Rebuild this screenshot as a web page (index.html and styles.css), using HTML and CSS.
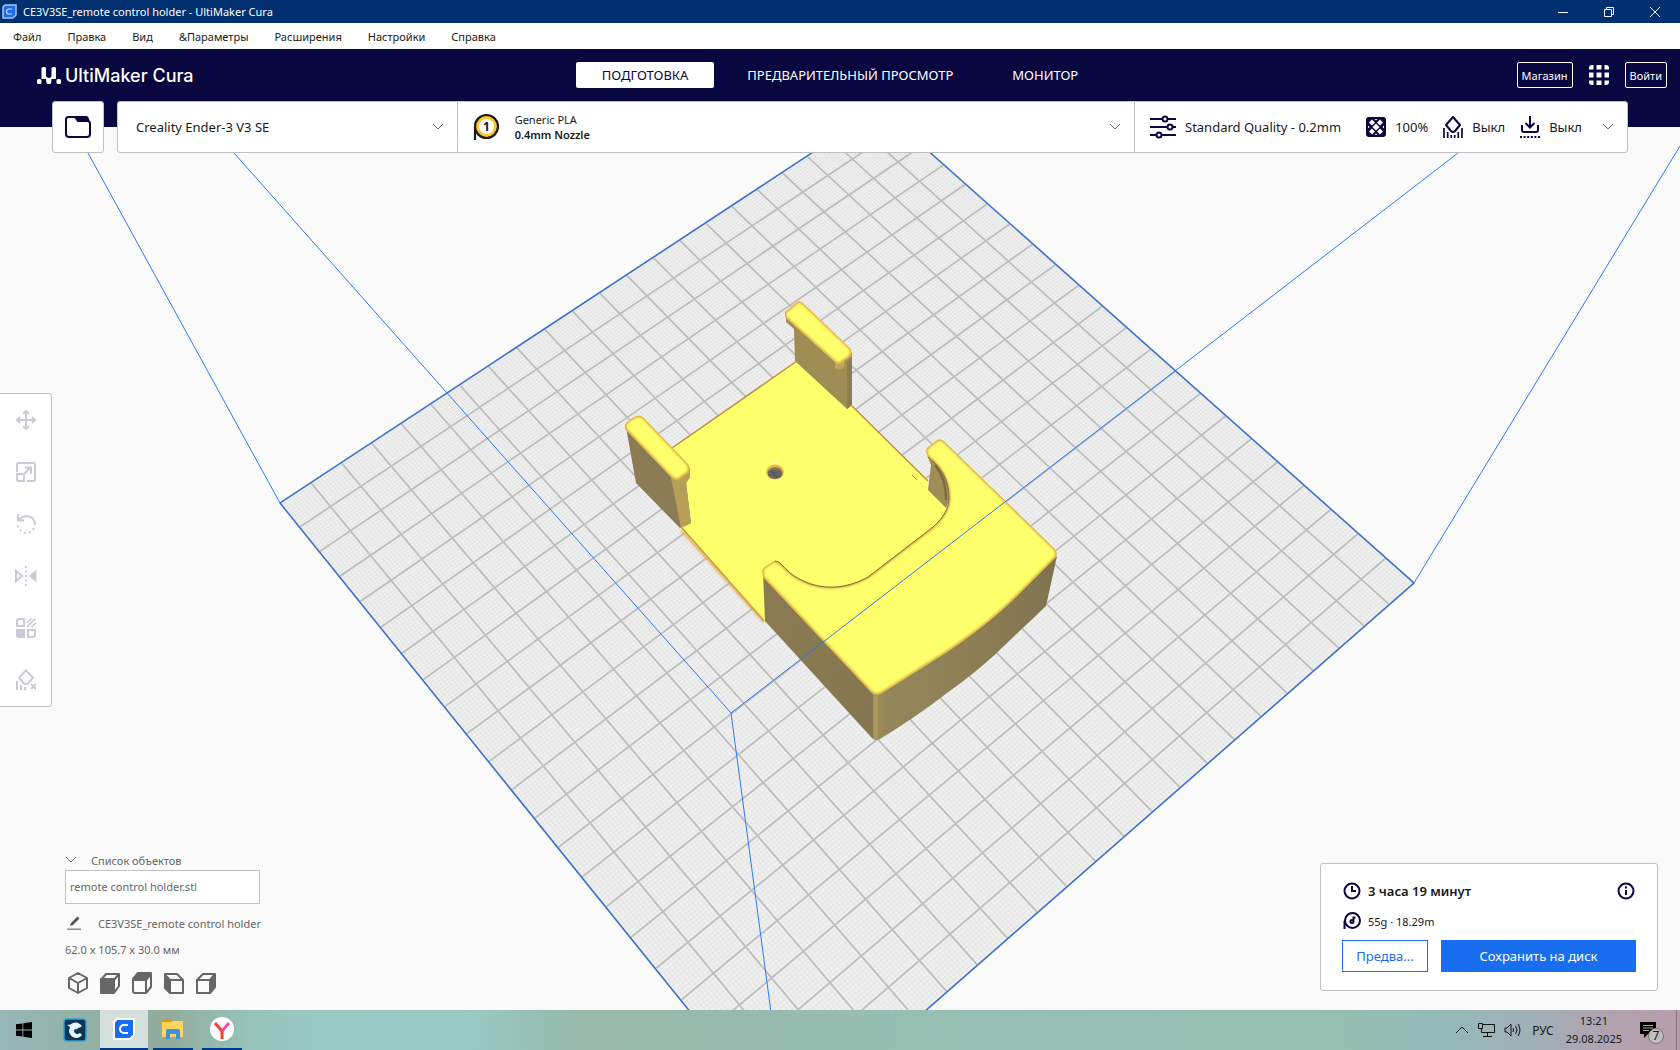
FILE: index.html
```html
<!DOCTYPE html>
<html lang="ru">
<head>
  <meta charset="utf-8">
  <meta name="viewport" content="width=device-width, initial-scale=1">
  <title>CE3V3SE_remote control holder - UltiMaker Cura</title>
  <link rel="stylesheet" href="styles.css">
</head>
<body>

  <div class="titlebar">
    <svg class="app-icon" width="15" height="15" viewBox="0 0 15 15">
      <path d="M3 1h11v10l-3 3H1V3z" fill="#1a6df0" stroke="#a9c4ee" stroke-width="1.5"/>
      <path d="M10 5H7a2.3 2.3 0 0 0 0 5h3" fill="none" stroke="#cfe0ff" stroke-width="1.2"/>
    </svg>
    <span class="titlebar-text">CE3V3SE_remote control holder - UltiMaker Cura</span>
    <div class="window-buttons">
      <button aria-label="Свернуть"><svg width="12" height="12" viewBox="0 0 12 12"><path d="M1 6.500h10"/></svg></button>
      <button aria-label="Развернуть"><svg width="12" height="12" viewBox="0 0 12 12"><path d="M1.500 3.500h7v7h-7zM3.500 3.500v-2h7v7h-2"/></svg></button>
      <button aria-label="Закрыть"><svg width="12" height="12" viewBox="0 0 12 12"><path d="M1 1l10 10M11 1L1 11"/></svg></button>
    </div>
  </div>

  <nav class="menu">
    <a href="#">Файл</a>
    <a href="#">Правка</a>
    <a href="#">Вид</a>
    <a href="#">&amp;Параметры</a>
    <a href="#">Расширения</a>
    <a href="#">Настройки</a>
    <a href="#">Справка</a>
  </nav>

  <header class="header">
    <div class="logo">
      <svg width="24" height="17" viewBox="0 0 24 17" fill="#fff">
        <rect x="0" y="12" width="4.500" height="5" rx="1.500"/>
        <rect x="19.500" y="12" width="4.500" height="5" rx="1.500"/>
        <path d="M4.500 1.500Q4.500 0 6 0h1.500Q9 0 9 1.500V9q1 2 3 2t2.500-2V1.500Q14.500 0 16 0h1.500Q19 0 19 1.500V12h-4.500q0 5-1.500 5h-2q-2 0-2-5H4.500z"/>
      </svg>
      <span>UltiMaker Cura</span>
    </div>
    <div class="tabs">
      <button class="tab active">ПОДГОТОВКА</button>
      <button class="tab">ПРЕДВАРИТЕЛЬНЫЙ ПРОСМОТР</button>
      <button class="tab">МОНИТОР</button>
    </div>
    <div class="account">
      <button class="outline-btn">Магазин</button>
      <button class="apps-btn" aria-label="Приложения">
        <svg width="20" height="20" viewBox="0 0 20 20" fill="#fff">
          <path d="M0 4.500V3Q0 0 3 0h1.500v4.500zM7.500 0h5v4.500h-5zM15.500 0H17q3 0 3 3v1.500h-4.500zM0 7.500h4.500v5H0zM7.500 7.500h5v5h-5zM15.500 7.500H20v5h-4.500zM0 15.500h4.500V20H3q-3 0-3-3zM7.500 15.500h5V20h-5zM15.500 15.500H20V17q0 3-3 3h-1.500z"/>
        </svg>
      </button>
      <button class="outline-btn">Войти</button>
    </div>
  </header>

  <main class="stage">

    <!-- 3d view -->
    <svg class="scene" viewBox="0 127 1680 883" preserveAspectRatio="xMidYMid slice">
      <defs>
        <linearGradient id="leftSide" x1="0" y1="0" x2="1" y2="1">
          <stop offset="0" stop-color="#8a7b54"/><stop offset="1" stop-color="#84774f"/>
        </linearGradient>
        <linearGradient id="frontSide" x1="0" y1="0" x2="1" y2="0">
          <stop offset="0" stop-color="#a39057"/><stop offset=".08" stop-color="#94865a"/>
          <stop offset=".5" stop-color="#8e7f55"/><stop offset="1" stop-color="#7f7350"/>
        </linearGradient>
        <filter id="soft"><feGaussianBlur stdDeviation="1"/></filter>
        <clipPath id="blockClip"><use href="#blockTop"/></clipPath>
        <clipPath id="barClip1"><use href="#bar1"/></clipPath>
        <clipPath id="barClip2"><use href="#bar2"/></clipPath>
      </defs>

      <path id="plate" fill="#f0f0f0"/>
      <path id="gridFine" fill="none" stroke="#e4e4e4" stroke-width="1"/>
      <path id="grid" fill="none" stroke="#bfbfbf" stroke-width="1.900"/>
      <path id="plateEdge" fill="none" stroke="#2f6fd6" stroke-width="1.300"/>

      <!-- base of the model -->
      <path d="M672 448L797 361 852 406 928 480 929 490 946 507 949 530 900 600 790 645 764 621 680 528z" fill="#ffff6c"/>
      <path d="M672 448L797 361M852 406L928 481M764 621L682 528" fill="none" stroke="#c08f42" stroke-width="1.500"/>
      <path d="M681 530L764 622" fill="none" stroke="#e0ad4b" stroke-width="2" filter="url(#soft)"/>
      <path d="M912 475l5 5" stroke="#a39448" stroke-width="1"/>

      <ellipse cx="775" cy="472" rx="9" ry="7.500" fill="#e5bc55"/>
      <ellipse cx="775" cy="473" rx="7.500" ry="6" fill="#8a7a50"/>
      <ellipse cx="775" cy="474" rx="7" ry="4.500" fill="#646464"/>
      <path d="M771 471l6 6" stroke="#444" stroke-width="1"/>
      <path d="M770 463h9" stroke="#ffffb8" stroke-width="1"/>

      <!-- posts -->
      <path d="M786 314v8l8 7 1 32 52 48 5-4v-52z" fill="#a08d56"/>
      <path d="M847 362l5-5v48l-5 4z" fill="#8d7d50"/>
      <path d="M835 361v7q5 3 9 0l1-7z" fill="#c4a456"/>
      <path id="bar1" d="M785 312L797 302Q800 300 803 303L850 348Q852 350 851 356L841 363Q838 365 835 362L785 317z" fill="#ffff6c"/>
      <g clip-path="url(#barClip1)"><use href="#bar1" fill="none" class="rim"/></g>

      <path d="M626 427L636 483 680 528 691 523 686 483 690 477V468z" fill="#8a7b54"/>
      <path d="M671 478L681 528 691 523 686 483 690 477V468z" fill="#b89f57"/>
      <path id="bar2" d="M625 425Q626 422 631 419L636 416Q641 415 644 418L688 464Q690 467 689 472L679 479Q676 481 672 478L627 431Q624 429 625 425z" fill="#ffff6c"/>
      <g clip-path="url(#barClip2)"><use href="#bar2" fill="none" class="rim"/></g>

      <!-- front block -->
      <path d="M927 455L931 465 928 490 946 508 951 495 948 475z" fill="#a08d56"/>
      <path d="M935 465Q946 478 946 500" fill="none" stroke="#75684a" stroke-width="2"/>
      <path d="M763 572L765 621 872 738Q875 741 879 739L884 690z" fill="url(#leftSide)"/>
      <path d="M873 690V738Q876 741 880 739 916 717 947 693 980 670 1007 643L1046 606 1057 556 1020 580z" fill="url(#frontSide)"/>
      <path id="blockTop" d="M762 571Q763 568 766 566L774 561Q778 561 782 565C790 574 797 579 811 584 830 590 850 587 868 577L933 527C944 517 949 508 949 498 949 480 941 467 928 457Q925 452 927 448L937 440Q941 438 945 442L1055 549Q1058 553 1056 557L1017 596Q990 623 947 652L882 693Q876 696 872 693L763 577z" fill="#ffff6c"/>
      <g clip-path="url(#blockClip)"><use href="#blockTop" fill="none" class="rim"/></g>
      <path d="M775 561Q779 561 782 565C790 574 797 579 811 584 830 590 850 587 868 577L933 527C944 517 949 508 949 498 949 480 941 467 928 457" fill="none" stroke="#806a3b" stroke-width="1"/>
      <path d="M876 696V739" stroke="#b09a58" stroke-width="3"/>

      <!-- build volume -->
      <path class="volume" d="M88 153L280 503M234 153L731 713 1458 153M731 713L787 1132M1414 583L1680 146"/>
    </svg>

    <div class="toolbar">
      <button class="open-btn" aria-label="Открыть файл">
        <svg width="26" height="24" viewBox="0 0 26 24">
          <path d="M3.500 2H10l3 4h9.500Q25 6 25 8.500V19q0 3-3 3H4q-3 0-3-3V4.500Q1 2 3.500 2z" fill="none" stroke="#08073f" stroke-width="2"/>
          <path d="M9.500 1H21q3 0 3.500 5.500H13z" fill="#08073f"/>
        </svg>
      </button>
      <div class="config">
        <label class="machine">
          <select aria-label="Принтер"><option>Creality Ender-3 V3 SE</option></select>
          <svg class="chevron" width="12" height="8" viewBox="0 0 12 8"><path d="M1 1l5 5 5-5"/></svg>
        </label>
        <button class="material">
          <svg width="26" height="28" viewBox="0 0 26 28">
            <path d="M2 27V14" stroke="#191919" stroke-width="2.200"/>
            <circle cx="13.500" cy="13.500" r="11.500" fill="#ffc72c" stroke="#191919" stroke-width="2.200"/>
            <circle cx="13.500" cy="13.500" r="7.500" fill="#fff"/>
            <text x="13.500" y="18" text-anchor="middle" font-size="12" font-weight="700" fill="#191919">1</text>
          </svg>
          <span class="material-text">Generic PLA<b>0.4mm Nozzle</b></span>
          <svg class="chevron" width="12" height="8" viewBox="0 0 12 8"><path d="M1 1l5 5 5-5"/></svg>
        </button>
        <button class="settings">
          <svg width="26" height="24" viewBox="0 0 26 24" fill="none" stroke="#08073f" stroke-width="2">
            <path d="M0 4h12M18 4h8M0 12h17M23 12h3M0 20h6M12 20h14"/>
            <circle cx="15" cy="4" r="2.500"/><circle cx="20" cy="12" r="2.500"/><circle cx="9" cy="20" r="2.500"/>
          </svg>
          <span class="profile">Standard Quality - 0.2mm</span>
          <span class="setting">
            <svg width="20" height="20" viewBox="0 0 20 20">
              <rect width="20" height="20" rx="3" fill="#08073f"/>
              <path d="M6 2.500l3 3-3 3-3-3zM14 2.500l3 3-3 3-3-3zM10 6.500l3.500 3.500-3.500 3.500L6.500 10zM6 11.500l3 3-3 3-3-3zM14 11.500l3 3-3 3-3-3zM8.500 2h3L10 3.500zM8.500 18h3L10 16.500zM2 8.500v3L3.500 10zM18 8.500v3L16.500 10z" fill="#fff"/>
            </svg>
            100%
          </span>
          <span class="setting">
            <svg width="20" height="22" viewBox="0 0 20 22" fill="none" stroke="#08073f" stroke-width="2">
              <path d="M10 1L17 9 12 15Q10 17 8 15L3 9z" stroke-linejoin="round"/>
              <path d="M1 12v10M4.700 16v6M8.300 19v3M11.700 19v3M15.300 16v6M19 12v10" stroke-width="1.700"/>
            </svg>
            Выкл
          </span>
          <span class="setting">
            <svg width="20" height="22" viewBox="0 0 20 22" fill="none" stroke="#08073f" stroke-width="2">
              <path d="M10 0v11M5.500 7l4.500 4.500L14.500 7M2 9v5q0 2 2 2h12q2 0 2-2V9"/>
              <path d="M0 21h20" stroke-dasharray="2 1.600"/>
            </svg>
            Выкл
          </span>
          <svg class="chevron" width="12" height="8" viewBox="0 0 12 8"><path d="M1 1l5 5 5-5"/></svg>
        </button>
      </div>
    </div>

    <div class="tools">
      <button aria-label="Перемещение"><svg width="20" height="20" viewBox="0 0 20 20"><path d="M10 1v18M1 10h18M7 4l3-3 3 3M7 16l3 3 3-3M4 7l-3 3 3 3M16 7l3 3-3 3"/></svg></button>
      <button aria-label="Масштаб"><svg width="20" height="20" viewBox="0 0 20 20"><path d="M1 10V3q0-2 2-2h14q2 0 2 2v14q0 2-2 2h-6M1 12h7v7H3q-2 0-2-2zM8 12l7-7M9 5.500h6V12"/></svg></button>
      <button aria-label="Поворот"><svg width="20" height="20" viewBox="0 0 20 20"><path d="M2 0v6.500h6M3 6Q6 2 11 2q8 1 8 9"/><path d="M18 14Q15 19 10 19T1 11" stroke-dasharray="2 3"/></svg></button>
      <button aria-label="Зеркало"><svg width="22" height="20" viewBox="0 0 22 20"><path d="M1 5v10l6-5z"/><path d="M21.500 3.500v13L14 10z" fill="#cbcad8" stroke="none"/><path d="M11 0v20" stroke-dasharray="2 2.500"/></svg></button>
      <button aria-label="Параметры модели"><svg width="20" height="20" viewBox="0 0 20 20"><path d="M3 1h5v7H1V3q0-2 2-2zM12 12h7v5q0 2-2 2h-5z"/><path d="M11 5l4.500-4.500M11 9l8.500-8.500M15.500 9L20 4.500" stroke-width="1.700"/><path d="M0 11h9v9H3q-3 0-3-3z" fill="#cbcad8" stroke="none"/></svg></button>
      <button aria-label="Блокировка поддержек"><svg width="20" height="22" viewBox="0 0 20 22"><path d="M10 1.500l7 7-5 6q-2 1-4 0l-5-6z"/><path d="M1 12v9M5 16v5M9 18v3M15 15l5 5M20 15l-5 5"/></svg></button>
    </div>

    <div class="bottom">
      <section class="objects">
        <button class="objects-toggle">
          <svg class="chevron" width="12" height="8" viewBox="0 0 12 8"><path d="M1 1l5 5 5-5"/></svg>
          Список объектов
        </button>
        <ul class="object-list"><li>remote control holder.stl</li></ul>
        <div class="job">
          <svg width="14" height="14" viewBox="0 0 14 14"><path d="M0 13.500h14" stroke="#8a8a8a" stroke-width="2"/><path d="M3 10l1-3 6.500-6.500 2 2L6 9z" fill="#555"/></svg>
          CE3V3SE_remote control holder
        </div>
        <div class="size">62.0 x 105.7 x 30.0 мм</div>
        <div class="views">
          <button aria-label="3D"><svg width="20" height="22" viewBox="0 0 20 22"><path d="M10 1l9 5v10l-9 5-9-5V6zM1 6l9 5 9-5M10 11v10"/></svg></button>
          <button aria-label="Спереди"><svg width="20" height="22" viewBox="0 0 20 22"><path d="M1 8l5-6h13v12l-5 7M19 2l-5 6"/><path d="M0 7h14v14H2q-2 0-2-2z" fill="#666"/></svg></button>
          <button aria-label="Сверху"><svg width="20" height="22" viewBox="0 0 20 22"><path d="M1 8v11q0 2 2 2h11V8zM14 21l5-6V3"/><path d="M0 8l6-7h13v1l-5 6z" fill="#666"/></svg></button>
          <button aria-label="Слева"><svg width="20" height="22" viewBox="0 0 20 22"><path d="M6 8h13v13H6zM1 2h12l6 6"/><path d="M0 2l6 6v13l-6-6z" fill="#666"/></svg></button>
          <button aria-label="Справа"><svg width="20" height="22" viewBox="0 0 20 22"><path d="M1 8h13v13H1zM1 8l6-6h12"/><path d="M14 8l5-6v13l-5 6z" fill="#666"/></svg></button>
        </div>
      </section>

      <section class="action">
        <div class="action-row">
          <svg width="18" height="18" viewBox="0 0 18 18"><circle cx="9" cy="9" r="7.500"/><path d="M9 4v5h4"/></svg>
          <b>3 часа 19 минут</b>
          <button class="info-btn" aria-label="Подробнее"><svg width="18" height="18" viewBox="0 0 18 18"><circle cx="9" cy="9" r="7.500"/><path d="M9 8v5M9 4.500v2"/></svg></button>
        </div>
        <div class="action-row small">
          <svg width="18" height="18" viewBox="0 0 18 18"><circle cx="9.500" cy="8.500" r="7.500"/><circle cx="9" cy="9.500" r="1.500"/><path d="M1.500 9v8M10.500 8V5.500h2"/></svg>
          <span>55g · 18.29m</span>
        </div>
        <div class="action-buttons">
          <button class="preview-btn">Предва...</button>
          <button class="save-btn">Сохранить на диск</button>
        </div>
      </section>
    </div>
  </main>

  <footer class="taskbar">
    <button class="task start" aria-label="Пуск"><svg width="16" height="16" viewBox="0 0 16 16"><path d="M0 2.300L6.500 1.400V7.600H0zM7.300 1.300L16 0v7.600H7.300zM0 8.400h6.500v6.200L0 13.700zM7.300 8.400H16V16l-8.700-1.300z"/></svg></button>
    <button class="task" aria-label="Creality Print"><svg width="24" height="24" viewBox="0 0 24 24">
      <rect x="1" y="1" width="22" height="22" rx="3" fill="#0e3557" stroke="#2ca5d8" stroke-width="1.500"/>
      <path d="M19 8Q15 3 10 5 8 7 4 7q3 1 3 3-2 3 0 6 2 4 7 4 3 0 5-3l-2-2q-3 2-5 0-2-2 0-4 2 1 3-1 2 0 4-2z" fill="#e9f1fa"/></svg></button>
    <button class="task running current" aria-label="UltiMaker Cura"><svg width="22" height="22" viewBox="0 0 22 22">
      <path d="M4 1h17v16l-4 4H1V4z" fill="#1a6df0" stroke="#fff" stroke-width="2"/>
      <path d="M15 7h-4a4 4 0 0 0 0 8h4" fill="none" stroke="#fff" stroke-width="2"/></svg></button>
    <button class="task running" aria-label="Проводник"><svg width="22" height="20" viewBox="0 0 22 20">
      <path d="M0 0h9l2 3H0z" fill="#dc9b00"/><path d="M0 3h9l2-1h10v16H0z" fill="#ffd35c"/>
      <path d="M4 20v-8q0-2 2-2h10q2 0 2 2v8h-4v-5H8v5z" fill="#3c91d8"/></svg></button>
    <button class="task running" aria-label="Yandex"><svg width="24" height="24" viewBox="0 0 24 24">
      <circle cx="12" cy="12" r="12" fill="#fff"/><path d="M5 6l7 8v8" fill="none" stroke="#f9412c" stroke-width="3"/><path d="M12 14l7-8" stroke="#f44ba5" stroke-width="3"/></svg></button>

    <div class="tray">
      <svg width="14" height="8" viewBox="0 0 14 8"><path d="M1 7l6-6 6 6"/></svg>
      <svg width="17" height="14" viewBox="0 0 17 14"><path d="M5 1.500h11.500v8H3.500V6M.5.500h4v5h-4zM9.500 9.500v4M5 13.500h9"/></svg>
      <svg width="18" height="14" viewBox="0 0 18 14"><path d="M1 5h2l4-4v12L3 9H1zM9 5q1 2 0 4M11.500 3q3 4 0 8M14 1q4 6 0 12"/></svg>
      <span class="lang">РУС</span>
      <span class="clock">13:21<br>29.08.2025</span>
      <span class="notify">
        <svg width="16" height="16" viewBox="0 0 16 16"><path d="M0 0h16v12H8l-4 4v-4H0z" fill="#000" stroke="none"/><path d="M3 3.500h10M3 6h10M3 8.500h6" stroke="#b5a0aa"/></svg>
        <span class="badge">7</span>
      </span>
    </div>
  </footer>

  <script src="plate.js"></script>
</body>
</html>
```

FILE: styles.css
```css
* {
  box-sizing: border-box;
}

body {
  margin: 0;
  height: 100vh;
  display: flex;
  flex-direction: column;
  overflow: hidden;
  background-color: #fafafa;
  color: #191919;
  font-family: "Noto Sans", "Open Sans", sans-serif;
  font-size: 11px;
}

button {
  font: inherit;
  color: inherit;
  background: none;
  border: none;
  padding: 0;
  cursor: pointer;
}

b {
  font-weight: 600;
}

svg {
  display: block;
  flex: none;
}

.titlebar {
  display: flex;
  align-items: center;
  gap: 6px;
  height: 23px;
  padding: 0 2px;
  background-color: #003070;
  color: #fff;
}

.window-buttons {
  display: flex;
  margin-left: auto;
}

.window-buttons button {
  width: 46px;
  display: flex;
  justify-content: center;
}

.window-buttons svg {
  fill: none;
  stroke: #fff;
}

.menu {
  display: flex;
  align-items: center;
  gap: 26px;
  height: 26px;
  padding-left: 13px;
  background-color: #fff;
}

.menu a {
  color: #191919;
  text-decoration: none;
}

/* header */
.header {
  display: grid;
  grid-template-columns: 1fr auto 1fr;
  align-items: center;
  height: 78px;
  padding: 0 13px 26px;
  background-color: #08073f;
  color: #fff;
}

.logo {
  display: flex;
  align-items: center;
  gap: 4px;
  padding-left: 24px;
  font-family: Inter, sans-serif;
  font-size: 18px;
  font-weight: 500;
}

.tabs {
  display: flex;
  gap: 7px;
}

.tab {
  height: 26px;
  padding: 0 26px;
  border-radius: 2px;
  font-size: 13px;
}

.tab.active {
  background-color: #fff;
  color: #08073f;
}

.account {
  display: flex;
  justify-content: flex-end;
  align-items: center;
  gap: 16px;
}

.outline-btn {
  height: 26px;
  padding: 0 4px;
  border: 1px solid #fff;
  border-radius: 2px;
}

/* stage */
.stage {
  flex: 1;
  position: relative;
  display: flex;
  flex-direction: column;
  min-height: 0;
}

.scene {
  position: absolute;
  top: 0;
  left: 0;
  width: 100%;
  height: 100%;
}

.volume {
  fill: none;
  stroke: #2a7af5;
  stroke-width: 1;
}

.rim {
  stroke: #d69d3c;
  stroke-width: 3;
  filter: url(#soft);
}

.toolbar {
  position: relative;
  display: flex;
  gap: 13px;
  height: 52px;
  margin: -26px 52px 0;
}

.open-btn {
  display: flex;
  align-items: center;
  justify-content: center;
  width: 52px;
  background-color: #fff;
  border: 1px solid #c0c0c0;
  border-radius: 3px;
}

.config {
  flex: 1;
  display: grid;
  grid-template-columns: 1fr 2fr 493px;
  background-color: #fff;
  border: 1px solid #c0c0c0;
  border-radius: 3px;
}

.chevron {
  fill: none;
  stroke: #6a6a76;
  margin-left: auto;
}

.machine,
.material,
.settings {
  display: flex;
  align-items: center;
  padding: 0 13px 0 15px;
}

.machine {
  padding-left: 18px;
}

.machine select {
  flex: 1;
  appearance: none;
  border: none;
  background: none;
  padding: 0;
  color: inherit;
  font: inherit;
  font-size: 13px;
}

.material,
.settings {
  border-left: 1px solid #c0c0c0;
  text-align: left;
}

.material-text {
  margin-left: 16px;
  line-height: 15px;
}

.material-text b {
  display: block;
}

.settings {
  font-size: 13px;
}

.profile {
  margin-left: 9px;
  margin-right: auto;
}

.setting {
  display: flex;
  align-items: center;
  gap: 9px;
  margin-right: 15px;
}

.settings .chevron {
  margin-left: 5px;
}

.tools {
  position: relative;
  display: flex;
  flex-direction: column;
  width: 52px;
  margin: auto 0;
  background-color: #fff;
  border: 1px solid #c0c0c0;
  border-left: none;
  border-radius: 0 3px 3px 0;
}

.tools button {
  display: flex;
  align-items: center;
  justify-content: center;
  height: 52px;
}

.tools svg {
  fill: none;
  stroke: #cbcad8;
  stroke-width: 2;
}

/* lists and actions keep out of the way of the centred tools */
.bottom {
  position: relative;
  display: flex;
  justify-content: space-between;
  align-items: flex-end;
  margin-top: -96px;
  padding: 0 22px 16px 65px;
}

.objects {
  color: #666;
}

.objects-toggle {
  display: flex;
  align-items: center;
  gap: 14px;
  height: 20px;
}

.object-list {
  list-style: none;
  width: 195px;
  height: 34px;
  margin: 0;
  padding: 0 4px;
  line-height: 32px;
  background-color: #fff;
  border: 1px solid #c0c0c0;
}

.job {
  display: flex;
  align-items: center;
  gap: 17px;
  height: 38px;
  padding-left: 2px;
}

.size {
  line-height: 16px;
}

.views {
  display: flex;
  gap: 12px;
  margin-top: 14px;
  padding-left: 3px;
}

.views svg {
  fill: none;
  stroke: #666;
  stroke-width: 2;
  stroke-linejoin: round;
}

.action {
  width: 338px;
  margin-bottom: 3px;
  padding: 14px 21px 18px;
  background-color: #fff;
  border: 1px solid #c0c0c0;
  border-radius: 3px;
}

.action-row {
  display: flex;
  align-items: center;
  gap: 7px;
  height: 26px;
  padding: 0 1px;
  font-size: 13px;
}

.action-row svg {
  fill: none;
  stroke: #08073f;
  stroke-width: 2;
}

.action-row.small {
  height: 34px;
  font-size: 11px;
}

.info-btn {
  margin-left: auto;
}

.action-buttons {
  display: flex;
  gap: 13px;
  margin-top: 2px;
  font-size: 13px;
}

.preview-btn,
.save-btn {
  height: 32px;
  border: 1px solid #196ef0;
}

.preview-btn {
  width: 86px;
  color: #196ef0;
}

.save-btn {
  flex: 1;
  background-color: #196ef0;
  color: #fff;
}

/* windows taskbar */
.taskbar {
  display: flex;
  height: 40px;
  background-image: linear-gradient(90deg, #97b6b8 0%, #94b1a8 5%, #92ab9d 10%, #96c4bb 15%, #98cac5 20%, #98c9c3 28%, #97b8aa 35%, #96c0b4 60%, #96bfb2 80%, #92bbb8 85%, #a0b0b7 91%, #b1a2b0 96%, #b79da9 100%);
}

.task {
  display: flex;
  align-items: center;
  justify-content: center;
  width: 40px;
  margin-right: 9px;
}

.task.start {
  width: 48px;
  margin-right: 7px;
}

.task.running {
  border-bottom: 2px solid #003a8c;
}

.task.current {
  width: 48px;
  margin-right: 5px;
  margin-left: -4px;
  background-color: #d5dfdb;
}

.tray {
  display: flex;
  align-items: center;
  gap: 9px;
  margin-left: auto;
  margin-right: 3px;
  padding-right: 12px;
  border-right: 1px solid #85757f;
}

.tray svg {
  fill: none;
  stroke: #111;
}

.lang {
  margin-left: 1px;
  font-size: 12px;
}

.clock {
  margin-left: 3px;
  line-height: 18px;
  text-align: center;
}

.notify {
  position: relative;
  margin-left: 9px;
  padding-right: 8px;
}

.badge {
  position: absolute;
  top: 6px;
  left: 8px;
  width: 16px;
  height: 16px;
  border: 1px solid #777;
  border-radius: 50%;
  background-color: #c3bdc0;
  font-size: 12px;
  line-height: 14px;
  text-align: center;
}
```

FILE: plate.js
```js
// corners of the build plate on screen: left, top, right, bottom
var L = [280, 503], T = [880, 108], R = [1414, 583], B = [787, 1132];
var cells = 22;

// perspective mapping of the unit square to the plate
var sx = L[0] - T[0] + R[0] - B[0], sy = L[1] - T[1] + R[1] - B[1];
var ax = T[0] - R[0], ay = T[1] - R[1];
var bx = B[0] - R[0], by = B[1] - R[1];
var det = ax * by - bx * ay;
var g = (sx * by - bx * sy) / det;
var h = (ax * sy - sx * ay) / det;

function point(u, v) {
  var w = 1 + g * u + h * v;
  var x = (L[0] + (T[0] - L[0] + g * T[0]) * u + (B[0] - L[0] + h * B[0]) * v) / w;
  var y = (L[1] + (T[1] - L[1] + g * T[1]) * u + (B[1] - L[1] + h * B[1]) * v) / w;
  return x.toFixed(1) + " " + y.toFixed(1);
}

function gridPath(n) {
  var d = "";
  for (var i = 0; i <= n; i++) {
    var t = i / n;
    d += "M" + point(t, 0) + "L" + point(t, 1);
    d += "M" + point(0, t) + "L" + point(1, t);
  }
  return d;
}

var outline = "M" + L + "L" + T + "L" + R + "L" + B + "z";
document.getElementById("plate").setAttribute("d", outline);
document.getElementById("plateEdge").setAttribute("d", outline);
document.getElementById("gridFine").setAttribute("d", gridPath(cells * 10));
document.getElementById("grid").setAttribute("d", gridPath(cells));
```
